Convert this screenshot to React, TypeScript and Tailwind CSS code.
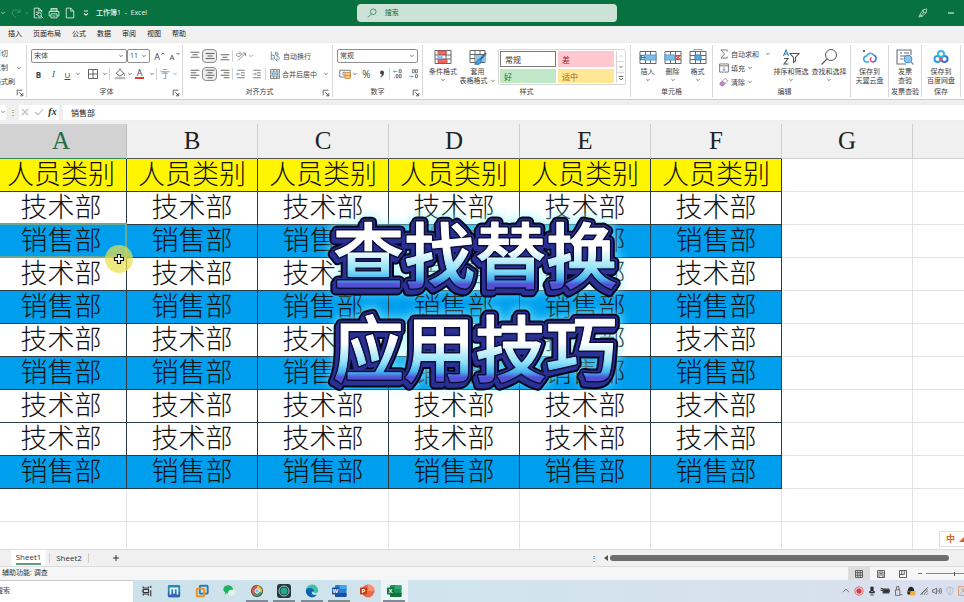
import type { ReactNode } from "react";

type IconProps = {
  box?: string;
  className?: string;
  children: ReactNode;
};

function Icon({ box = "0 0 16 16", className = "h-3 w-3", children }: IconProps) {
  return (
    <svg
      viewBox={box}
      className={`shrink-0 ${className}`}
      fill="none"
      stroke="currentColor"
      strokeWidth="1.1"
      aria-hidden="true"
    >
      {children}
    </svg>
  );
}

function Caret({ className = "h-1 w-1.5" }: { className?: string }) {
  return (
    <Icon box="0 0 8 6" className={className}>
      <path d="M1.500 1.500 4 4l2.500-2.500" />
    </Icon>
  );
}

function Launcher() {
  return (
    <button aria-label="更多设置" className="absolute right-0.5 bottom-0 h-2 w-2 text-[#555]">
      <Icon box="0 0 10 10" className="h-2 w-2">
        <path d="M1.500 8V1.500H8M4 4l4.500 4.500M8.500 5v3.500H5" />
      </Icon>
    </button>
  );
}

function Divider() {
  return <span className="h-3 w-px shrink-0 bg-[#d4d4d4]" />;
}

type GroupProps = {
  label?: string;
  launcher?: boolean;
  className: string;
  children: ReactNode;
};

function Group({ label, launcher, className, children }: GroupProps) {
  return (
    <section className={`relative my-0.5 flex shrink-0 flex-col border-r border-[#d9d9d9] pt-1 ${className}`}>
      <div className="flex-1">{children}</div>
      <div className="h-[10px] text-center leading-[10px] whitespace-nowrap">{label}</div>
      {launcher && <Launcher />}
    </section>
  );
}

type ToolProps = {
  label: string;
  active?: boolean;
  className?: string;
  children: ReactNode;
};

function Tool({ label, active, className = "w-[15px]", children }: ToolProps) {
  return (
    <button
      aria-label={label}
      className={`flex h-[14px] shrink-0 items-center justify-center gap-px rounded-sm ${className} ${
        active ? "border border-[#8c8c8c] bg-[#ececec]" : ""
      }`}
    >
      {children}
    </button>
  );
}

type BigToolProps = {
  lines: string[];
  menu?: boolean;
  inlineMenu?: boolean;
  className: string;
  icon: ReactNode;
};

function BigTool({ lines, menu, inlineMenu, className, icon }: BigToolProps) {
  return (
    <button className={`flex flex-col items-center whitespace-nowrap ${className}`}>
      <span className="mb-0.5 flex h-4 items-center">{icon}</span>
      {lines.map((line, i) => (
        <span key={line} className="flex items-center gap-0.5 leading-[9px]">
          {line}
          {inlineMenu && i === lines.length - 1 && <Caret />}
        </span>
      ))}
      {menu && (
        <span className="flex h-2 items-center">
          <Caret />
        </span>
      )}
    </button>
  );
}

function Lines({ rows }: { rows: [number, number, number][] }) {
  return (
    <Icon className="h-2.5 w-2.5">
      {rows.map(([x1, x2, y]) => (
        <path key={y} d={`M${x1} ${y}H${x2}`} strokeWidth="1.300" />
      ))}
    </Icon>
  );
}

function TitleBar() {
  return (
    <header className="flex h-[26px] shrink-0 items-center bg-[#07713f] text-[#e8f3ec]">
      <div className="flex w-[37%] shrink-0 items-center">
        <Caret />
        <button aria-label="恢复" className="ml-1 flex items-center gap-0.5 text-[#4f9d78]">
          <Icon>
            <path d="M13 3v4H9M13 7C10 2 3 3 3 8c0 2 2 4 5 6" />
          </Icon>
          <Caret />
        </button>
        <button aria-label="打印预览" className="ml-0.5">
          <Icon>
            <path d="M9 1.500H3v13h4M9 1.500 13 5v2M9 1.500V5h4M5 7h4M5 10h2" />
            <circle cx="10" cy="10" r="2.500" />
            <path d="m12 12 3 3M8 14.500h5" />
          </Icon>
        </button>
        <button aria-label="打印" className="ml-1">
          <Icon>
            <path d="M4 6V2h8v4M4 12H1.500V6h13v6H12M4 9h8v5.500H4zM4 4h8M6 12h4" />
          </Icon>
        </button>
        <button aria-label="新建" className="ml-1">
          <Icon>
            <path d="M9 1.500H3v13h10v-9zM9 1.500v4h4" />
          </Icon>
        </button>
        <button aria-label="自定义快速访问工具栏" className="ml-1.5">
          <Icon box="0 0 8 8" className="h-2 w-2">
            <path d="M2 2h4M2 4.500l2 1.500 2-1.500" />
          </Icon>
        </button>
        <h1 className="ml-1.5 text-[7px] font-medium whitespace-nowrap">工作簿1&nbsp; -&nbsp; Excel</h1>
      </div>
      <label className="flex h-[18px] w-[27%] items-center gap-2 rounded-sm bg-[#cde2d6] px-2.5 text-[#156b43]">
        <Icon className="h-2.5 w-2.5">
          <circle cx="10" cy="6" r="4.500" />
          <path d="M7 9.500 1.500 15" />
        </Icon>
        <input
          aria-label="搜索"
          placeholder="搜索"
          className="min-w-0 flex-1 text-[7px] outline-none placeholder:text-[#156b43]"
        />
      </label>
      <div className="flex flex-1 items-center justify-end gap-5 pr-2.5">
        <button aria-label="笔">
          <Icon className="h-2.5 w-2.5">
            <path d="M3 11 8 3l6-1.500-1 6L7 13zM3 11l-1.500 3.500L7 13M8 3l1 4 4 .500M9 7l-4 5" />
          </Icon>
        </button>
        <button aria-label="最小化">
          <Icon box="0 0 6 6" className="h-1.5 w-1.5">
            <path d="M0 3h6" />
          </Icon>
        </button>
      </div>
    </header>
  );
}

const menuTabs = ["插入", "页面布局", "公式", "数据", "审阅", "视图", "帮助"];

function MenuTabs() {
  return (
    <nav className="flex h-[17px] shrink-0 items-center gap-[11px] bg-[#f1f1f1] pl-2 text-[7px] text-[#222]">
      {menuTabs.map((tab) => (
        <button key={tab} className="whitespace-nowrap">
          {tab}
        </button>
      ))}
    </nav>
  );
}

function CellsIcon({ kind }: { kind: "insert" | "delete" | "format" }) {
  return (
    <Icon box="0 0 18 16" className="h-4 w-[18px]">
      <path d="M1 2.500h16v12H1zM1 6.500h16M1 10.500h16M6.500 2.500v12M11.500 2.500v12" stroke="#666" strokeWidth="1" />
      {kind === "insert" && (
        <>
          <path d="M5 6h12v5H5z" fill="#7dbbe8" stroke="#5a9fd2" />
          <path d="M7 8.500H1M3.500 6 1 8.500 3.500 11" stroke="#3279b8" />
        </>
      )}
      {kind === "delete" && (
        <>
          <path d="M1 6h10v5H1z" fill="#7dbbe8" stroke="#5a9fd2" />
          <path d="m11.500 6 5 5m0-5-5 5" stroke="#df5146" />
        </>
      )}
      {kind === "format" && (
        <>
          <path d="M6 6h6v5H6z" fill="#5aa9de" stroke="#3b84bd" />
          <path d="M5 .500h8M5 0v1.500M13 0v1.500" stroke="#75aeb8" />
        </>
      )}
    </Icon>
  );
}

const cellStyles = [
  { name: "常规", className: "border border-[#777] bg-white text-[#333]" },
  { name: "差", className: "bg-[#ffc7ce] text-[#9c2030]" },
  { name: "好", className: "bg-[#c0e8c8] text-[#19702c]" },
  { name: "适中", className: "bg-[#ffe796] text-[#946410]" },
];

function Ribbon() {
  return (
    <div className="flex h-[57px] shrink-0 overflow-hidden border-b border-[#cfcfcf] bg-white text-[7px] leading-[9px] text-[#444] shadow-sm">
      <Group className="w-[27px] overflow-hidden" launcher>
        <div className="-ml-1.5 flex flex-col items-start gap-[5px] whitespace-nowrap">
          <button>剪切</button>
          <button className="flex items-center gap-2">
            复制
            <Caret />
          </button>
          <button>格式刷</button>
        </div>
      </Group>

      <Group label="字体" launcher className="w-[156px] pl-1">
        <div className="flex h-[14px] items-center">
          <div className="flex w-24 items-center rounded-xs border border-[#8f8f8f] px-0.5">
            <select aria-label="字体" className="min-w-0 flex-1 appearance-none leading-3">
              <option>宋体</option>
            </select>
            <Caret />
          </div>
          <div className="flex w-[23px] items-center rounded-xs border border-[#8f8f8f] px-0.5">
            <select aria-label="字号" className="min-w-0 flex-1 appearance-none leading-3">
              <option>11</option>
            </select>
            <Caret />
          </div>
          <Tool label="增大字号" className="ml-0.5 w-[15px]">
            <span className="text-[9px]">A</span>
            <Icon box="0 0 4 8" className="h-2 w-1">
              <path d="m.5 2.500 1.500-1.500 1.500 1.500" strokeWidth=".8" />
            </Icon>
          </Tool>
          <Tool label="减小字号">
            <span className="text-[8px]">A</span>
            <Icon box="0 0 4 8" className="h-2 w-1">
              <path d="m.5 1 1.500 1.500 1.500-1.500" strokeWidth=".8" />
            </Icon>
          </Tool>
        </div>
        <div className="mt-1 flex h-[14px] items-center">
          <Tool label="加粗">
            <b className="text-[8px]">B</b>
          </Tool>
          <Tool label="倾斜">
            <i className="font-['Liberation_Serif',serif] text-[9px]">I</i>
          </Tool>
          <Tool label="下划线" className="w-6">
            <span className="mr-1 text-[8px] underline">U</span>
            <Caret />
          </Tool>
          <Tool label="边框" className="w-6">
            <Icon className="mr-0.5 h-3 w-3">
              <path d="M2 2h12v12H2zM8 2v12M2 8h12" />
            </Icon>
            <Caret />
          </Tool>
          <Divider />
          <Tool label="填充颜色" className="ml-0.5 w-[22px]">
            <Icon className="h-3 w-3">
              <path d="m3 7 5-5 5 5-5 4zM8 2V0M13 7l1 3" />
              <path d="M1 13.500h14" stroke="#bbb" strokeWidth="3" />
            </Icon>
            <Caret />
          </Tool>
          <Tool label="字体颜色" className="w-[22px]">
            <span className="mr-1 border-b-2 border-[#e03a2e] px-0.5 text-[9px] leading-2">A</span>
            <Caret />
          </Tool>
          <Divider />
          <Tool label="拼音" className="w-[22px] text-[#78909a]">
            <Icon className="h-3 w-3">
              <path d="M5 2h6M2 5h12M8 5v2M4 7h8M9 8v6H6" />
            </Icon>
            <Caret />
          </Tool>
        </div>
      </Group>

      <Group label="对齐方式" launcher className="w-[150px] pl-1">
        <div className="flex h-[14px] items-center">
          <Tool label="顶端对齐">
            <Lines rows={[[1, 15, 2], [4, 12, 6], [1, 15, 10]]} />
          </Tool>
          <Tool label="垂直居中" active>
            <Lines rows={[[1, 15, 4], [4, 12, 8], [1, 15, 12]]} />
          </Tool>
          <Tool label="底端对齐">
            <Lines rows={[[1, 15, 6], [4, 12, 10], [1, 15, 14]]} />
          </Tool>
          <Divider />
          <Tool label="方向" className="w-[22px] text-[#777]">
            <Icon>
              <path d="M4 14 14 4M10 4h4v4M2 7c0-3 4-4 5-1s-3 4-5 1M6 2l4 5" />
            </Icon>
            <Caret />
          </Tool>
          <span className="ml-2.5">
            <Divider />
          </span>
          <button className="ml-1 flex items-center gap-0.5 whitespace-nowrap">
            <Icon className="h-3 w-3 text-[#57808d]">
              <path d="M3 2v11M3 7h4v5H3M9 2v5M9 4h3v3H9M10 9h3c3 4-2 5-4 4M11 11l-2 2 2 2" />
            </Icon>
            自动换行
          </button>
        </div>
        <div className="mt-1 flex h-[14px] items-center">
          <Tool label="左对齐">
            <Lines rows={[[1, 15, 2], [1, 10, 6], [1, 15, 10], [1, 10, 14]]} />
          </Tool>
          <Tool label="居中" active>
            <Lines rows={[[1, 15, 2], [4, 12, 6], [1, 15, 10], [4, 12, 14]]} />
          </Tool>
          <Tool label="右对齐">
            <Lines rows={[[1, 15, 2], [6, 15, 6], [1, 15, 10], [6, 15, 14]]} />
          </Tool>
          <Divider />
          <Tool label="减少缩进量">
            <Icon className="h-2.5 w-2.5">
              <path d="M2 2h12M8 6h6M8 10h6M2 14h12" />
              <path d="M7 8H1M3 6 1 8l2 2" stroke="#3a86b8" />
            </Icon>
          </Tool>
          <Tool label="增加缩进量" className="w-[17px]">
            <Icon className="h-2.5 w-2.5">
              <path d="M2 2h12M8 6h6M8 10h6M2 14h12" />
              <path d="M1 8h6M5 6l2 2-2 2" stroke="#3a86b8" />
            </Icon>
          </Tool>
          <Divider />
          <button className="ml-1 flex items-center gap-0.5 whitespace-nowrap">
            <Icon className="h-2.5 w-2.5">
              <path d="M1 1h14v14H1zM1 5h14M1 11h14M6 1v4M11 1v4M6 11v4M11 11v4" />
              <path d="M1 5.500h14v5H1z" fill="#c7e4ee" stroke="none" />
              <path d="M3 8h10M5 6 3 8l2 2M11 6l2 2-2 2" stroke="#3a86b8" />
            </Icon>
            合并后居中
            <span className="ml-1">
              <Caret />
            </span>
          </button>
        </div>
      </Group>

      <Group label="数字" launcher className="w-[90px] px-1">
        <div className="flex h-[14px] items-center rounded-xs border border-[#8f8f8f] px-0.5">
          <select aria-label="数字格式" className="min-w-0 flex-1 appearance-none leading-3">
            <option>常规</option>
          </select>
          <Caret />
        </div>
        <div className="mt-1 flex h-[14px] items-center">
          <Tool label="会计数字格式" className="w-[22px]">
            <Icon className="h-3 w-3">
              <path d="M1 3h14v9H1z" stroke="#666" />
              <circle cx="7" cy="7.500" r="2" stroke="#666" />
              <path d="M8 6h7v8H8zM8 10h7" fill="#f6c88a" stroke="#d88b2c" />
            </Icon>
            <Caret />
          </Tool>
          <Tool label="百分比样式">
            <span className="text-[10px]">%</span>
          </Tool>
          <Tool label="千位分隔样式">
            <svg viewBox="0 0 8 10" className="h-2 w-2" fill="currentColor" aria-hidden="true">
              <circle cx="4" cy="3" r="2.500" />
              <path d="M6.500 3c0 3-1.500 5-4 6l-.5-1c1.500-.8 2.200-2 2-3z" />
            </svg>
          </Tool>
          <Divider />
          <Tool label="增加小数位数">
            <Icon className="h-2.5 w-2.5">
              <path d="M7 4H1M3 2 1 4l2 2" stroke="#3a86b8" />
              <path d="M10 1h3v5h-3zM5 9h3v5H5zM10 9h3v5h-3zM2 13v2" />
            </Icon>
          </Tool>
          <Tool label="减少小数位数">
            <Icon className="h-2.5 w-2.5">
              <path d="M7 1h3v5H7zM12 1h3v5h-3zM12 9h3v5h-3z" />
              <path d="M2 12h6M6 10l2 2-2 2" stroke="#3a86b8" />
            </Icon>
          </Tool>
        </div>
      </Group>

      <Group label="样式" className="w-[208px] px-1">
        <div className="flex">
          <BigTool
            lines={["条件格式"]}
            menu
            className="w-8"
            icon={
              <Icon box="0 0 18 16" className="h-4 w-[18px]">
                <path d="M1 1.500h16v13H1zM1 6h16M1 10h16M6 1.500v13M12 1.500v13" stroke="#666" strokeWidth="1" />
                <path d="M4 2h8v3.500H4zM4 10.500h9V14H4z" fill="#ef6b63" stroke="#d8433c" strokeWidth=".8" />
                <path d="M4 6h4v4H4z" fill="#9bcbee" stroke="#5e9fce" strokeWidth=".8" />
              </Icon>
            }
          />
          <BigTool
            lines={["套用", "表格格式"]}
            inlineMenu
            className="w-[37px]"
            icon={
              <Icon box="0 0 18 16" className="h-4 w-[18px]">
                <path d="M1 1.500h15v12H1zM1 5.500h15M1 9.500h15M6 1.500v12M11 1.500v12" stroke="#666" strokeWidth="1" />
                <path d="M6 6h10v7H6z" fill="#8cc5ee" stroke="none" />
                <path d="m17 4-6 7" stroke="#3d6d91" strokeWidth="2" />
                <path d="M11 10c-3 0-3 3-5 5 3 1 7 0 6-4z" fill="#4aa0dd" stroke="#2f7fba" />
              </Icon>
            }
          />
          <div className="ml-0.5 flex h-9 flex-1 rounded-xs border border-[#d5d5d5] p-px text-[8px]">
            <div className="grid flex-1 grid-cols-2 gap-0.5">
              {cellStyles.map((style) => (
                <button key={style.name} className={`px-1 text-left ${style.className}`}>
                  {style.name}
                </button>
              ))}
            </div>
            <div className="ml-0.5 flex w-2 flex-col divide-y divide-[#d5d5d5] border-l border-[#d5d5d5]">
              <button aria-label="上一行" className="flex flex-1 items-center justify-center text-[#bbb]">
                <Caret className="h-1 w-1.5 rotate-180" />
              </button>
              <button aria-label="下一行" className="flex flex-1 items-center justify-center">
                <Caret />
              </button>
              <button aria-label="其他" className="flex flex-1 items-center justify-center">
                <Icon box="0 0 8 8" className="h-1.5 w-1.5">
                  <path d="M1 2h6M1.500 4 4 6.500 6.500 4" />
                </Icon>
              </button>
            </div>
          </div>
        </div>
      </Group>

      <Group label="单元格" className="w-[82px]">
        <div className="flex justify-center pl-0.5">
          <BigTool lines={["插入"]} menu className="w-[25px]" icon={<CellsIcon kind="insert" />} />
          <BigTool lines={["删除"]} menu className="w-[25px]" icon={<CellsIcon kind="delete" />} />
          <BigTool lines={["格式"]} menu className="w-[25px]" icon={<CellsIcon kind="format" />} />
        </div>
      </Group>

      <Group label="编辑" className="w-[138px] pl-1.5">
        <div className="flex">
          <div className="flex w-[53px] flex-col items-start gap-1 whitespace-nowrap">
            <button className="flex items-center gap-0.5">
              <Icon className="h-2.5 w-2.5">
                <path d="M13 4V1.500H3L9 8l-6 6.500h10V12" />
              </Icon>
              自动求和
              <span className="ml-1">
                <Caret />
              </span>
            </button>
            <button className="flex items-center gap-0.5">
              <Icon className="h-2.5 w-2.5">
                <path d="M1 1.500h14v13H1zM1 4.500h14" />
                <path d="M8 6v6M5.500 9.500 8 12l2.500-2.500" stroke="#2f84b0" />
              </Icon>
              填充
              <Caret />
            </button>
            <button className="flex items-center gap-0.5">
              <Icon className="h-2.5 w-2.5">
                <path d="m2 10 8-8 4 4-8 8H4l-2-2z" stroke="#8c5a9e" />
                <path d="m2 10 3.500-3.500 4 4L6 14H4l-2-2z" fill="#c58ad0" stroke="#8c5a9e" />
              </Icon>
              清除
              <Caret />
            </button>
          </div>
          <BigTool
            lines={["排序和筛选"]}
            menu
            className="w-[38px]"
            icon={
              <Icon box="0 0 18 16" className="h-4 w-[18px]">
                <path d="M1.500 7 4 1l2.500 6M2.300 5h3.400" stroke="#3a86b8" />
                <path d="M2 9.500h4L2 15h4.500M8 4.500h9l-3.500 4V12l-2 1.500v-5z" stroke="#555" />
              </Icon>
            }
          />
          <BigTool
            lines={["查找和选择"]}
            menu
            className="w-[38px]"
            icon={
              <Icon box="0 0 18 16" className="h-4 w-[18px]">
                <circle cx="11" cy="6" r="5.500" stroke="#555" strokeWidth="1" />
                <path d="M7 10 1.500 15.500" stroke="#555" />
              </Icon>
            }
          />
        </div>
      </Group>

      <Group className="w-[38px]">
        <BigTool
          lines={["保存到", "天翼云盘"]}
          className="w-full"
          icon={
            <Icon className="h-4 w-4">
              <path d="M7 13H5a3 3 0 0 1-.5-6 4 4 0 0 1 7-1" stroke="#37a4dc" strokeWidth="1.500" />
              <path d="M11.500 6A3.600 3.600 0 0 1 11 13" stroke="#3a73d8" strokeWidth="1.500" />
              <path d="M11 13c-3 0-4-5-1-4" stroke="#e0506a" strokeWidth="1.300" />
              <circle cx="2" cy="2" r="1" fill="#333" stroke="none" />
            </Icon>
          }
        />
      </Group>

      <Group label="发票查验" className="w-[33px]">
        <BigTool
          lines={["发票", "查验"]}
          className="w-full"
          icon={
            <Icon box="0 0 18 16" className="h-4 w-[18px]">
              <path d="M15 6V1H1v14h9M4 4h2M8 4h5M4 7h6M4 10h3" stroke="#6b7075" />
              <circle cx="12" cy="10" r="3.800" fill="#8fc3ea" stroke="#4a8fc7" />
              <path d="m15 13 2.500 2.500" stroke="#4a8fc7" />
            </Icon>
          }
        />
      </Group>

      <Group label="保存" className="w-[39px]">
        <BigTool
          lines={["保存到", "百度网盘"]}
          className="w-full"
          icon={
            <Icon className="h-4 w-4">
              <circle cx="4.500" cy="10" r="3" stroke="#2f9fe8" strokeWidth="2" />
              <circle cx="11.500" cy="10" r="3" stroke="#3a6fe0" strokeWidth="2" />
              <circle cx="8" cy="5" r="3" stroke="#35b9d8" strokeWidth="2" />
              <path d="m6.500 9 3 3" stroke="#e8536a" strokeWidth="2" />
            </Icon>
          }
        />
      </Group>
    </div>
  );
}

function FormulaBar() {
  return (
    <div className="flex h-6 shrink-0 items-center bg-[#efefef] text-[#555]">
      <button aria-label="名称框" className="flex h-[15px] w-1.5 items-center bg-white">
        <Caret />
      </button>
      <span className="w-[13px] text-center text-[8px] leading-none">⋮</span>
      <div className="flex h-[15px] w-10 items-center justify-around bg-white">
        <button aria-label="取消" className="text-[#bbb]">
          <Icon box="0 0 8 8" className="h-2 w-2">
            <path d="m1 1 6 6m0-6L1 7" />
          </Icon>
        </button>
        <button aria-label="输入" className="text-[#bbb]">
          <Icon box="0 0 10 8" className="h-2 w-2.5">
            <path d="m1 4 3 3 5-6" />
          </Icon>
        </button>
        <button
          aria-label="插入函数"
          className="font-['Liberation_Serif',serif] text-[10px] leading-none font-bold text-[#333] italic"
        >
          fx
        </button>
      </div>
      <input
        aria-label="编辑栏"
        defaultValue="销售部"
        className="ml-1 h-[15px] min-w-0 flex-1 bg-white pl-2 text-[8px] text-[#222] outline-none"
      />
    </div>
  );
}

const columns = ["A", "B", "C", "D", "E", "F"];
const rows = [
  "人员类别",
  "技术部",
  "销售部",
  "技术部",
  "销售部",
  "技术部",
  "销售部",
  "技术部",
  "技术部",
  "销售部",
];

const rowFill: Record<string, string> = {
  人员类别: "bg-[#fff500]",
  技术部: "bg-white",
  销售部: "bg-[#009fee]",
};

const bannerLines = [
  { id: "banner-top", text: "查找替换", y: 77, fill: "url(#fill-top)" },
  { id: "banner-bottom", text: "应用技巧", y: 170, fill: "url(#fill-bottom)" },
];

function FillStops() {
  return (
    <>
      <stop offset=".4" stopColor="#ffffff" />
      <stop offset=".7" stopColor="#8fe2f8" />
      <stop offset=".85" stopColor="#45b4ee" />
      <stop offset=".93" stopColor="#5450d6" />
    </>
  );
}

function Banner() {
  return (
    <div className="pointer-events-none absolute inset-x-0 top-[81px] flex justify-center pr-3.5">
      <svg viewBox="0 0 330 200" className="h-[200px] w-[330px] overflow-visible" role="img" aria-label="查找替换应用技巧">
        <defs>
          <linearGradient id="fill-top" gradientUnits="userSpaceOnUse" x1="0" y1="18" x2="0" y2="84">
            <FillStops />
          </linearGradient>
          <linearGradient id="fill-bottom" gradientUnits="userSpaceOnUse" x1="0" y1="111" x2="0" y2="177">
            <FillStops />
          </linearGradient>
          <filter id="glow" x="-20%" y="-20%" width="140%" height="140%">
            <feGaussianBlur stdDeviation="4" />
          </filter>
          {bannerLines.map((line) => (
            <text
              key={line.id}
              id={line.id}
              x="165"
              y={line.y}
              textAnchor="middle"
              className="font-['Noto_Sans_CJK_SC',sans-serif] text-[71px] font-medium"
            >
              {line.text}
            </text>
          ))}
        </defs>
        {bannerLines.map(({ id, fill }) => (
          <g key={id} strokeLinejoin="round">
            <use href={`#${id}`} stroke="#8cf6ff" strokeWidth="16" fill="#8cf6ff" filter="url(#glow)" opacity=".6" />
            <use href={`#${id}`} stroke="#05071c" strokeWidth="11" fill="#05071c" />
            <use href={`#${id}`} x="-2" y="3" stroke="#05071c" strokeWidth="11" fill="#05071c" />
            <use href={`#${id}`} x="-2" y="3" stroke="#2a3094" strokeWidth="7" fill="#2a3094" />
            <use href={`#${id}`} stroke="#2a3094" strokeWidth="7" fill="#2a3094" />
            <use href={`#${id}`} stroke="#0b0e38" strokeWidth="4" fill="#0b0e38" />
            <use href={`#${id}`} stroke={fill} strokeWidth="1" fill={fill} />
          </g>
        ))}
      </svg>
    </div>
  );
}

function Sheet() {
  return (
    <main className="relative min-h-0 flex-1 overflow-hidden bg-white">
      <div className="-ml-1">
        <table className="w-full table-fixed border-separate border-spacing-0 font-['Liberation_Sans','Noto_Sans_CJK_SC',sans-serif] text-[27px] leading-8 font-light text-[#111]">
          <thead className="font-['Liberation_Serif',serif] text-[25px] leading-[34px]">
            <tr className="h-[35px] bg-[#f0f0f0]">
              {columns.map((column) => (
                <th
                  key={column}
                  className={`w-[131px] border-r border-b p-0 font-normal ${
                    column === "A"
                      ? "border-r-[#bdbdbd] border-b-[#2f8a57] bg-[#d2d2d2] text-[#256b47]"
                      : "border-r-[#cfcfcf] border-b-[#555] text-[#222]"
                  }`}
                >
                  {column}
                </th>
              ))}
              <th className="w-[131px] border-r border-b border-[#cfcfcf] p-0 font-normal text-[#222]">G</th>
              <th className="border-b border-[#cfcfcf] p-0" />
            </tr>
          </thead>
          <tbody>
            {rows.map((text, i) => (
              <tr key={i} className="h-[33px]">
                {columns.map((column) => (
                  <td
                    key={column}
                    className={`border-r border-b border-[#2b3a44] p-0 text-center whitespace-nowrap ${rowFill[text]}`}
                  >
                    {text}
                  </td>
                ))}
                <td className="border-r border-b border-[#e3e3e3] p-0" />
                <td className="border-b border-[#e3e3e3] p-0" />
              </tr>
            ))}
            {[0, 1].map((i) => (
              <tr key={i} className="h-[33px]">
                {columns.map((column) => (
                  <td key={column} className="border-r border-b border-[#e3e3e3] p-0" />
                ))}
                <td className="border-r border-b border-[#e3e3e3] p-0" />
                <td className="border-b border-[#e3e3e3] p-0" />
              </tr>
            ))}
          </tbody>
        </table>
      </div>

      {/* selected cell and pointer */}
      <div className="absolute top-[99px] left-0 h-[35px] w-[127px] border-y-2 border-r-2 border-[#6aa890]" />
      <div className="absolute top-[121px] left-[105px] flex h-7 w-7 items-center justify-center rounded-full bg-[#e9e04a]/70">
        <svg viewBox="0 0 12 12" className="h-3 w-3" fill="#fff" stroke="#111" strokeWidth="1.2" aria-hidden="true">
          <path d="M4.500 1.500h3v3h3v3h-3v3h-3v-3h-3v-3h3z" />
        </svg>
      </div>

      <Banner />

      <div className="absolute right-0 bottom-0.5 flex h-4 w-[25px] items-center gap-1 overflow-hidden border border-r-0 border-[#ddd] bg-white pl-1.5 text-[9px] font-bold text-[#dc6420]">
        中
        <svg viewBox="0 0 6 6" className="h-1.5 w-1.5 shrink-0" fill="currentColor" aria-hidden="true">
          <path d="M6 0v6H0z" />
        </svg>
      </div>
    </main>
  );
}

function SheetTabs() {
  return (
    <div className="flex h-[18px] shrink-0 items-center border-y border-[#dcdcdc] bg-[#f0f0f0] text-[8px] text-[#333]">
      <button className="ml-[11px] flex h-full w-[35px] items-center justify-center rounded-b-sm bg-white">
        <span className="border-b-2 border-[#5d9b80] leading-3">Sheet1</span>
      </button>
      <button className="ml-[3px] h-2.5 w-10 border-x border-[#cfcfcf] leading-[10px]">Sheet2</button>
      <button aria-label="新工作表" className="ml-[23px]">
        <Icon box="0 0 8 8" className="h-2 w-2">
          <path d="M4 1v6M1 4h6" strokeWidth="1" />
        </Icon>
      </button>
      <span className="ml-auto">⋮</span>
      <div className="flex w-[38%] items-center gap-0.5 pl-1.5">
        <svg viewBox="0 0 4 6" className="h-1.5 w-1" fill="#555" aria-hidden="true">
          <path d="M4 0v6L0 3z" />
        </svg>
        <div className="mr-[15px] h-1.5 flex-1 rounded-full bg-[#6e6e6e]" />
      </div>
    </div>
  );
}

function StatusBar() {
  return (
    <footer className="flex h-[13px] shrink-0 items-center bg-[#f6f6f6] text-[7px] text-[#333]">
      <span className="pl-0.5">辅助功能: 调查</span>
      <div className="ml-auto flex h-full items-center text-[#555]">
        <button aria-label="普通" className="flex h-full w-[22px] items-center justify-center bg-[#dcdcdc]">
          <Icon className="h-2 w-2">
            <path d="M1 1h14v14H1zM1 5.500h14M1 10.500h14M5.500 1v14M10.500 1v14" strokeWidth="1.800" />
          </Icon>
        </button>
        <button aria-label="页面布局" className="flex h-full w-[22px] items-center justify-center">
          <Icon className="h-2 w-2">
            <path d="M1 1h14v14H1zM4 4h8v11H4zM6 7h4M6 10h4" strokeWidth="1.800" />
          </Icon>
        </button>
        <button aria-label="分页预览" className="flex h-full w-[22px] items-center justify-center">
          <Icon className="h-2 w-2">
            <path d="M1 1h14v14H1zM5.500 1v8M10.500 1v8M1 9h9.500" strokeWidth="1.800" />
          </Icon>
        </button>
        <button aria-label="缩小" className="flex w-3 justify-center">
          <span className="h-px w-1 bg-[#777]" />
        </button>
        <span className="flex w-[38px] items-center">
          <span className="h-px w-7 bg-[#888]" />
          <span className="h-1 w-px bg-[#555]" />
          <span className="h-px flex-1 bg-[#888]" />
        </span>
      </div>
    </footer>
  );
}

type OfficeIconProps = {
  letter: string;
  dark: string;
  mid: string;
  light: string;
  round?: boolean;
};

function OfficeIcon({ letter, dark, mid, light, round }: OfficeIconProps) {
  return (
    <svg viewBox="0 0 16 16" className="h-4 w-4" aria-hidden="true">
      {round ? (
        <>
          <circle cx="9" cy="8" r="6.500" fill={mid} />
          <path d="M9 1.500A6.500 6.500 0 0 1 15.500 8H9z" fill={light} />
        </>
      ) : (
        <>
          <rect x="4" y="2" width="11.500" height="12" rx="1" fill={mid} />
          <path d="M9 2h5.500a1 1 0 0 1 1 1v3H9z" fill={light} />
          <path d="M4 10h11.500v3a1 1 0 0 1-1 1H5a1 1 0 0 1-1-1z" fill={dark} />
        </>
      )}
      <rect x="1" y="4.500" width="7" height="7" rx=".8" fill={dark} />
      <text x="4.500" y="10.200" textAnchor="middle" fontSize="6" fontWeight="700" fill="#fff">
        {letter}
      </text>
    </svg>
  );
}

type TaskApp = { name: string; open?: boolean; active?: boolean; icon: ReactNode };

const apps: TaskApp[] = [
  {
    name: "任务视图",
    icon: (
      <Icon className="h-3 w-3 text-[#333]">
        <path d="M3 2v2h7V2M3 14v-2h7v2M3 6h7v4H3zM13 1v3M13 7v8M1 8h2" strokeWidth="1.500" />
      </Icon>
    ),
  },
  {
    name: "浏览器",
    icon: (
      <svg viewBox="0 0 16 16" className="h-[14px] w-[14px]" aria-hidden="true">
        <rect x="1" y="1" width="14" height="14" rx="1.500" fill="#2588b5" />
        <path d="M1 9h14v4.500a1.500 1.500 0 0 1-1.500 1.500h-11A1.500 1.500 0 0 1 1 13.500z" fill="#3564ae" />
        <path d="M4 12V5h8v7M8 5v6" fill="none" stroke="#e8f6fa" strokeWidth="2" />
      </svg>
    ),
  },
  {
    name: "虚拟机",
    icon: (
      <svg viewBox="0 0 16 16" className="h-[14px] w-[14px]" fill="none" strokeWidth="2.200" aria-hidden="true">
        <rect x="5.500" y="2" width="9" height="9" rx="1" stroke="#277bb4" />
        <rect x="2" y="5.500" width="8.500" height="8.500" rx="1" stroke="#ed9122" />
      </svg>
    ),
  },
  {
    name: "微信",
    icon: (
      <svg viewBox="0 0 16 16" className="h-[14px] w-[14px]" aria-hidden="true">
        <ellipse cx="7" cy="6" rx="5.500" ry="4.500" fill="#1eb45d" />
        <path d="m4 9-1 3 4-2z" fill="#1eb45d" />
        <ellipse cx="11" cy="10" rx="4" ry="3.500" fill="#e5f2ee" />
      </svg>
    ),
  },
  {
    name: "360 浏览器",
    open: true,
    icon: (
      <svg viewBox="0 0 16 16" className="h-[14px] w-[14px]" aria-hidden="true">
        <circle cx="8" cy="8" r="7" fill="#555" />
        <path d="M8 8V2a6 6 0 0 1 5.500 8z" fill="#f0c244" />
        <path d="M8 8 13.500 10A6 6 0 0 1 4 12.500z" fill="#4b9b63" />
        <path d="M8 8 4 12.500A6 6 0 0 1 8 2z" fill="#d45649" />
        <circle cx="8" cy="8" r="2.500" fill="#7db8ee" stroke="#fff" />
      </svg>
    ),
  },
  {
    name: "录屏",
    open: true,
    icon: (
      <svg viewBox="0 0 16 16" className="h-4 w-4" aria-hidden="true">
        <rect x="1" y="1" width="14" height="14" rx="3" fill="#203a3d" />
        <circle cx="8" cy="8" r="5" fill="none" stroke="#a9c9c4" />
        <circle cx="8" cy="8" r="3.500" fill="#20aa88" />
      </svg>
    ),
  },
  {
    name: "Edge",
    open: true,
    icon: (
      <svg viewBox="0 0 16 16" className="h-[14px] w-[14px]" aria-hidden="true">
        <circle cx="8" cy="8" r="7" fill="#1774bf" />
        <path d="M1 7a7 7 0 0 1 14 1c0 3-5 3-5 1 1-4-6-6-9-2z" fill="#3fc2a0" />
        <path d="M1 7c4-5 10-1 9 2-2-3-5 0-3 3 1 2 4 2 6 1-5 5-12 0-12-6z" fill="#1261ad" />
        <path d="M10 9c0 2 5 2 5-1v3c-2 2-7 2-7-1 0-1 1-2 2-1z" fill="#d2e4ee" />
      </svg>
    ),
  },
  { name: "Word", open: true, icon: <OfficeIcon letter="W" dark="#1b4fa3" mid="#2b7cd3" light="#41a5ee" /> },
  { name: "PowerPoint", icon: <OfficeIcon letter="P" dark="#c43e1c" mid="#ed6c47" light="#ff8f6b" round /> },
  { name: "Excel", open: true, active: true, icon: <OfficeIcon letter="X" dark="#107340" mid="#1b935a" light="#33a873" /> },
];

const tray: { name: string; icon: ReactNode }[] = [
  { name: "显示隐藏的图标", icon: <path d="m3 10 5-5 5 5" /> },
  {
    name: "录制",
    icon: (
      <>
        <circle cx="8" cy="8" r="6.500" stroke="#dd3b3b" />
        <circle cx="8" cy="8" r="3.800" fill="#dd3b3b" stroke="#dd3b3b" />
      </>
    ),
  },
  { name: "麦克风", icon: <path d="M6 1.500h4v8H6zM4 8v3h8V8M8 11v4M5 14.500h6" fill="#222" /> },
  { name: "电池", icon: <path d="M5 5h9v6H5zM1 4h4M1 7h4M14 7h1.500v2H14" fill="#333" strokeWidth="1.800" /> },
  { name: "U 盘", icon: <path d="M4 6h7v9H4zM5.500 6V1h4v5M11 14h4" /> },
  {
    name: "QQ",
    icon: (
      <>
        <path d="M8 1c5 0 5 6 6 10s-13 4-12 0S3 1 8 1z" fill="#222" stroke="none" />
        <path d="M3 7c3 2 7 2 10 0v2c-3 2-7 2-10 0z" fill="#d8422e" stroke="none" />
        <path d="M8 8h7v7H5z" fill="#efb43e" stroke="none" />
      </>
    ),
  },
  { name: "网络", icon: <path d="M2 14 14 2M5 14c0-4 4-8 9-8M9 14c0-3 2-5 5-5M12 14l2-2" /> },
  { name: "音量", icon: <path d="M1 6h3l3-3v10l-3-3H1zM9 6c1 1 1 3 0 4M11 4c2 2 2 6 0 8M13.500 3c2 3 2 7 0 10" /> },
  { name: "安全中心", icon: <path d="m8 1.500 5 2v5c0 3-3 5-5 6-2-1-5-3-5-6v-5zM8 2v12" stroke="#aab3bd" /> },
  {
    name: "输入法",
    icon: <path d="M1 1h14v14H1zM4 5h7M11 5l-7 7M8 8l5 4" stroke="#e07a3a" />,
  },
];

function Taskbar() {
  return (
    <div className="flex h-[22px] shrink-0 items-center overflow-hidden bg-linear-to-r from-[#cbe1eb] via-[#d2e4ed] to-[#dadfee]">
      <label className="flex h-full w-[133px] shrink-0 items-center border-t border-[#ccc] bg-white">
        <input
          aria-label="搜索"
          placeholder="搜索"
          className="-ml-1 w-full text-[7px] outline-none placeholder:text-[#444]"
        />
      </label>
      <div className="flex h-full w-[275px] shrink-0 justify-between">
        {apps.map((app) => (
          <button
            key={app.name}
            aria-label={app.name}
            className={`flex h-full w-[27px] shrink-0 flex-col items-center justify-between pt-0.5 ${
              app.active ? "bg-[#edf4f7]" : ""
            }`}
          >
            <span className="flex h-[18px] items-center">{app.icon}</span>
            {app.open && <span className="h-0.5 w-[22px] shrink-0 bg-[#7d8c99]" />}
          </button>
        ))}
      </div>
      <div className="-mr-1 ml-auto flex items-center gap-[3px] text-[#444]">
        {tray.map((item) => (
          <button key={item.name} aria-label={item.name}>
            <Icon className="h-2.5 w-2.5">{item.icon}</Icon>
          </button>
        ))}
      </div>
    </div>
  );
}

export default function App() {
  return (
    <div className="flex h-screen flex-col overflow-hidden bg-[#f0f0f0] font-['Open_Sans','Noto_Sans_CJK_SC',sans-serif]">
      <TitleBar />
      <MenuTabs />
      <Ribbon />
      <FormulaBar />
      <Sheet />
      <SheetTabs />
      <StatusBar />
      <Taskbar />
    </div>
  );
}
